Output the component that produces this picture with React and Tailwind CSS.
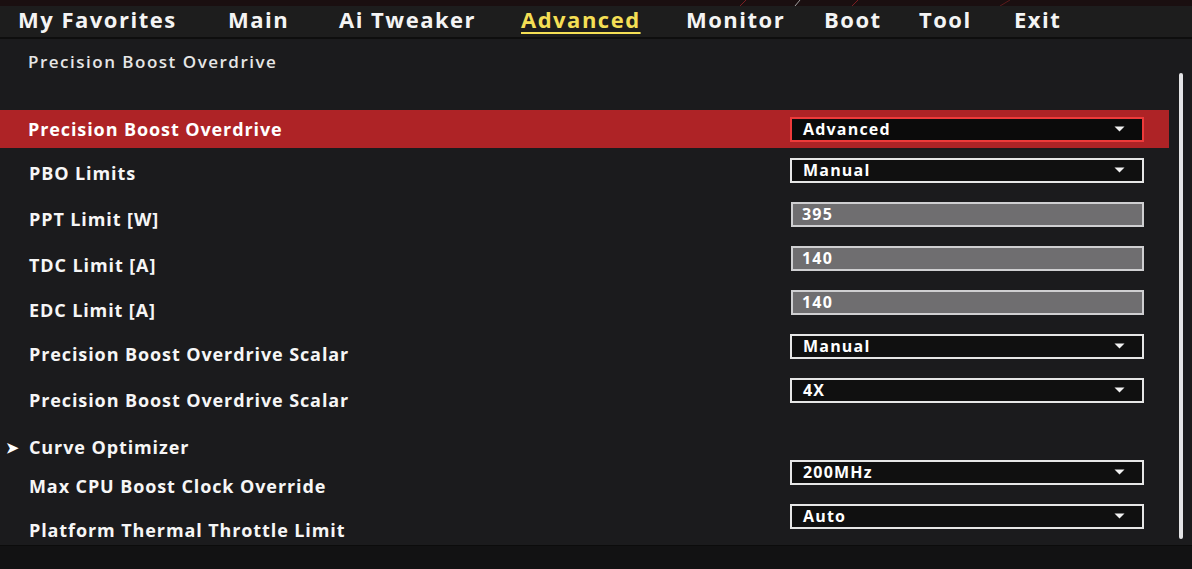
import React from "react";

const font = { fontFamily: '"Open Sans", "Noto Sans", "Liberation Sans", sans-serif' };

const tabs = [
  { name: "My Favorites", w: "w-[210px]" },
  { name: "Main", w: "w-[111px]" },
  { name: "Ai Tweaker", w: "w-[182px]" },
  { name: "Advanced", w: "w-[165px]", active: true },
  { name: "Monitor", w: "w-[138px]" },
  { name: "Boot", w: "w-[95px]" },
  { name: "Tool", w: "w-[95px]" },
  { name: "Exit", w: "w-[60px]" },
];

function Caret() {
  return (
    <svg width="11" height="6" viewBox="0 0 11 6" className="shrink-0">
      <path d="M0.5 0.5 H10.5 L5.5 5.5 Z" fill="#f2f2f2" />
    </svg>
  );
}

function Dropdown({ value, active }) {
  return (
    <div
      className={
        "w-[354px] h-[25px] flex items-center justify-between pl-[11px] pr-[17px] " +
        (active
          ? "bg-[#0b0b0b] border-2 border-[#ee3a3a]"
          : "bg-[#101010] border-2 border-[#e6e6e6]")
      }
    >
      <span className="text-[16px] font-bold text-white leading-none tracking-[1.2px]">{value}</span>
      <Caret />
    </div>
  );
}

function Input({ value }) {
  return (
    <div className="w-[353px] h-[25px] flex items-center pl-[9px] bg-[#6f6e70] border-2 border-[#cfcfd1]">
      <span className="text-[16px] font-bold text-white leading-none tracking-[1.2px]">{value}</span>
    </div>
  );
}

const rows = [
  { label: "PBO Limits", h: "h-[44px]", lm: "mt-[6px]", ctrl: <Dropdown value="Manual" /> },
  { label: "PPT Limit [W]", h: "h-[44px]", lm: "mt-[10px]", ctrl: <Input value="395" /> },
  { label: "TDC Limit [A]", h: "h-[44px]", lm: "mt-[14px]", ctrl: <Input value="140" /> },
  { label: "EDC Limit [A]", h: "h-[44px]", lm: "mt-[16px]", ctrl: <Input value="140" /> },
  { label: "Precision Boost Overdrive Scalar", h: "h-[44px]", lm: "mt-[16px]", ctrl: <Dropdown value="Manual" /> },
  { label: "Precision Boost Overdrive Scalar", h: "h-[44px]", lm: "mt-[20px]", ctrl: <Dropdown value="4X" /> },
  { label: "Curve Optimizer", h: "h-[38px]", lm: "mt-[32px]", sub: true },
  { label: "Max CPU Boost Clock Override", h: "h-[44px]", lm: "mt-[28px]", ctrl: <Dropdown value="200MHz" /> },
  { label: "Platform Thermal Throttle Limit", h: "h-[44px]", lm: "mt-[28px]", ctrl: <Dropdown value="Auto" /> },
];

export default function App() {
  return (
    <div
      style={font}
      className="w-[1192px] h-[569px] overflow-hidden bg-[#1b1b1d] flex flex-col text-white"
    >
      {/* decorative top strip */}
      <div className="relative h-[6px] bg-[#1a0f10] overflow-hidden">
        <svg className="absolute inset-0" width="1192" height="6">
          <line x1="740" y1="6" x2="746" y2="0" stroke="#7a1e22" strokeWidth="1" />
          <line x1="795" y1="6" x2="800" y2="0" stroke="#a0a0a0" strokeWidth="1" />
          <line x1="852" y1="6" x2="858" y2="0" stroke="#7a1e22" strokeWidth="1" />
          <line x1="1000" y1="6" x2="1010" y2="0" stroke="#5a1a1c" strokeWidth="1" />
        </svg>
      </div>
      {/* nav */}
      <div className="h-[33px] shrink-0 bg-[#1d1d1d] flex items-center border-b-2 border-[#0e0e0e]">
        <div className="flex items-center pl-[18px] -mt-[1px]">
          {tabs.map((t) => (
            <div key={t.name} className={t.w + " shrink-0"}>
              <span
                className={
                  "text-[22px] font-bold leading-none tracking-[1.5px] " +
                  (t.active
                    ? "text-[#f4df55] underline decoration-2 underline-offset-[4px]"
                    : "text-[#f4f4f4]")
                }
              >
                {t.name}
              </span>
            </div>
          ))}
        </div>
      </div>

      <div className="flex flex-1 min-h-0">
        <div className="flex-1 flex flex-col">
          {/* breadcrumb */}
          <div className="h-[45px] shrink-0 flex items-center pl-[28px]">
            <span className="text-[17px] font-semibold text-[#e6e6e6] tracking-[1.5px]">
              Precision Boost Overdrive
            </span>
          </div>
          <div className="h-[26px] shrink-0" />
          {/* highlighted row */}
          <div className="w-[1169px] h-[38px] shrink-0 bg-[#ae2326] flex items-center justify-between pl-[28px] pr-[25px]">
            <span className="text-[18px] font-bold text-white tracking-[0.9px]">Precision Boost Overdrive</span>
            <Dropdown value="Advanced" active />
          </div>
          {rows.map((r, i) => (
            <div
              key={i}
              className={
                "w-[1169px] shrink-0 flex items-center justify-between pl-[29px] pr-[25px] " + r.h
              }
            >
              <span
                className={
                  "relative text-[18px] font-bold text-[#f6f6f6] tracking-[0.9px] leading-[26px] " + r.lm
                }
              >
                {r.sub && (
                  <span className="absolute -left-[23px] top-0 text-[15px] text-white tracking-normal">➤</span>
                )}
                {r.label}
              </span>
              {r.ctrl}
            </div>
          ))}
        </div>
        {/* scrollbar */}
        <div className="w-[23px] flex justify-center pt-[34px] pb-[6px]">
          <div className="w-[4px] h-full bg-[#e4e4e6] rounded-sm" />
        </div>
      </div>
      <div className="h-[24px] shrink-0 bg-[#121213] border-t border-[#0c0c0c]" />
    </div>
  );
}
